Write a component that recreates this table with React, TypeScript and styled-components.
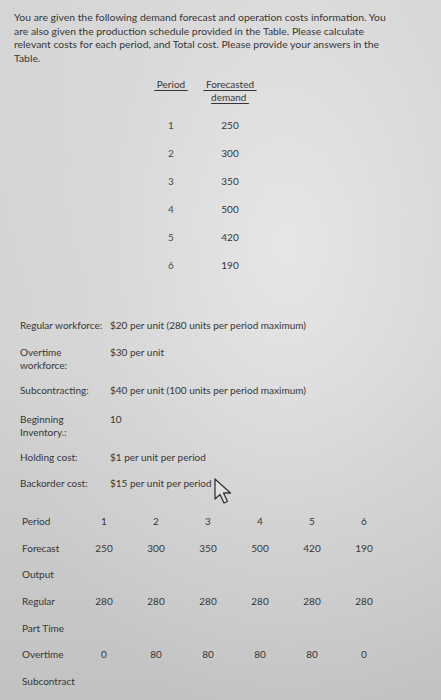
import React from "react";
import styled, { createGlobalStyle } from "styled-components";

const Global = createGlobalStyle`
  html, body { margin: 0; padding: 0; background: #cfcfcf; }
  * { box-sizing: border-box; }
`;

const Page = styled.div`
  position: relative;
  width: 441px;
  height: 700px;
  overflow: hidden;
  padding: 11px 0 0 0;
  font-family: Lato, "Open Sans", sans-serif;
  color: #363636;
  background:
    radial-gradient(ellipse at 65% 35%, rgba(232,232,232,0.9) 0%, rgba(222,222,222,0.4) 45%, rgba(200,200,200,0) 75%),
    linear-gradient(180deg, #d6d6d6 0%, #d3d3d3 50%, #c2c2c2 100%);
`;

const Intro = styled.p`
  margin: 0 0 0 14px;
  font-size: 10.4px;
  line-height: 13.5px;
`;

const DemandTable = styled.div`
  display: grid;
  grid-template-columns: 46px 64px;
  column-gap: 4px;
  margin: 13px 0 0 148px;
  font-size: 10px;
`;

const HeadCell = styled.div`
  text-align: center;
  line-height: 13px;
  text-decoration: underline;
  text-underline-offset: 2px;
  margin-bottom: 6.5px;
`;

const NumCell = styled.div<{ $muted?: boolean }>`
  text-align: center;
  height: 28px;
  line-height: 28px;
  color: ${(p) => (p.$muted ? "#4a4a4a" : "#363636")};
`;

const Costs = styled.div`
  display: flex;
  flex-direction: column;
  margin: 40px 0 0 20px;
  font-size: 10px;
  line-height: 13px;
`;

const CostRow = styled.div<{ $gap: number }>`
  display: grid;
  grid-template-columns: 90px 1fr;
  margin-bottom: ${(p) => p.$gap}px;
`;

const Table = styled.div`
  display: grid;
  grid-template-columns: 56px repeat(6, 52px);
  grid-auto-rows: 26.7px;
  margin: 18px 0 0 22px;
  font-size: 10px;
  align-items: center;
`;

const Label = styled.div`
  text-align: left;
`;

const Val = styled.div`
  text-align: center;
`;

const Cursor = styled.svg`
  position: absolute;
  left: 213px;
  top: 477px;
`;

const demand = [250, 300, 350, 500, 420, 190];

const costs: { label: React.ReactNode; value: string; gap: number }[] = [
  { label: "Regular workforce:", value: "$20 per unit (280 units per period maximum)", gap: 14 },
  { label: <>Overtime<br />workforce:</>, value: "$30 per unit", gap: 12 },
  { label: "Subcontracting:", value: "$40 per unit (100 units per period maximum)", gap: 16 },
  { label: <>Beginning<br />Inventory.:</>, value: "10", gap: 12 },
  { label: "Holding cost:", value: "$1 per unit per period", gap: 13 },
  { label: "Backorder cost:", value: "$15 per unit per period", gap: 0 },
];

const rows: { label: string; values: string[] }[] = [
  { label: "Period", values: ["1", "2", "3", "4", "5", "6"] },
  { label: "Forecast", values: demand.map(String) },
  { label: "Output", values: ["", "", "", "", "", ""] },
  { label: "Regular", values: ["280", "280", "280", "280", "280", "280"] },
  { label: "Part Time", values: ["", "", "", "", "", ""] },
  { label: "Overtime", values: ["0", "80", "80", "80", "80", "0"] },
  { label: "Subcontract", values: ["", "", "", "", "", ""] },
];

export default function App() {
  return (
    <>
      <Global />
      <Page>
        <Intro>
          You are given the following demand forecast and operation costs information. You
          <br />
          are also given the production schedule provided in the Table. Please calculate
          <br />
          relevant costs for each period, and Total cost. Please provide your answers in the
          <br />
          Table.
        </Intro>

        <DemandTable>
          <HeadCell>&nbsp;Period&nbsp;</HeadCell>
          <HeadCell>
            &nbsp;Forecasted&nbsp;
            <br />
            demand&nbsp;
          </HeadCell>
          {demand.map((d, i) => (
            <React.Fragment key={i}>
              <NumCell $muted>{i + 1}</NumCell>
              <NumCell>{d}</NumCell>
            </React.Fragment>
          ))}
        </DemandTable>

        <Costs>
          {costs.map((c, i) => (
            <CostRow key={i} $gap={c.gap}>
              <div>{c.label}</div>
              <div>{c.value}</div>
            </CostRow>
          ))}
        </Costs>

        <Table>
          {rows.map((r) => (
            <React.Fragment key={r.label}>
              <Label>{r.label}</Label>
              {r.values.map((v, j) => (
                <Val key={j}>{v}</Val>
              ))}
            </React.Fragment>
          ))}
        </Table>

        <Cursor width="24" height="30" viewBox="0 0 24 30">
          <path
            d="M2 2 L2 22 L7 17.5 L11 26 L14.5 24.5 L10.5 16 L17.5 16 Z"
            fill="rgba(230,230,230,0.6)"
            stroke="#363636"
            strokeWidth="1.3"
            strokeLinejoin="round"
          />
        </Cursor>
      </Page>
    </>
  );
}
